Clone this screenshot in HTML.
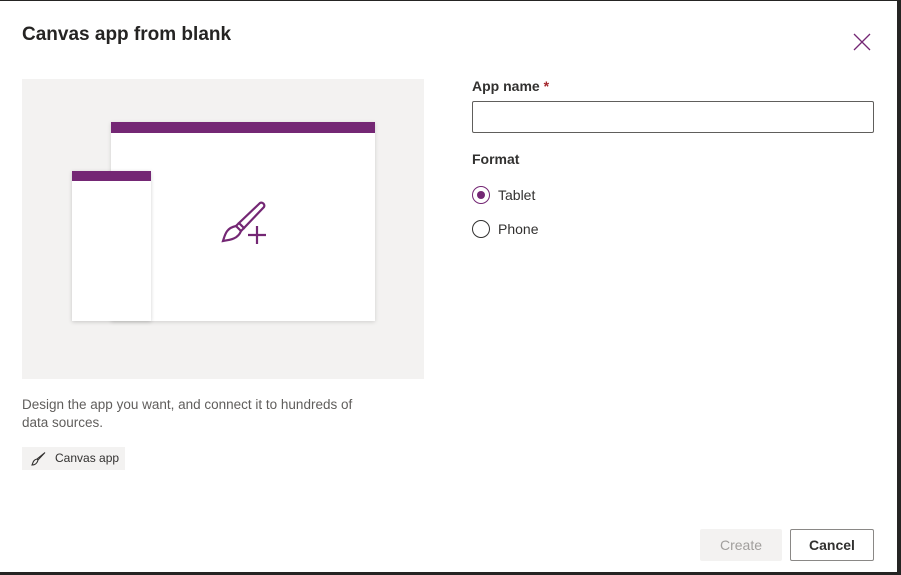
<!DOCTYPE html>
<html><head><style>
body{margin:0;width:901px;height:575px;background:#252423;position:relative;overflow:hidden;font-family:"Segoe UI","Liberation Sans",sans-serif;color:#323130}
.dlg{position:absolute;left:0;top:1px;width:897px;height:571px;background:#fff}
.a{position:absolute}
</style></head><body>
<div class="dlg">
<div class="a" style="left:22px;top:23px;font-size:19px;font-weight:bold;color:#252423">Canvas app from blank</div>
<svg class="a" style="left:853px;top:32px" width="18" height="18"><path d="M1 1L17 17M17 1L1 17" stroke="#742774" stroke-width="1.3"/></svg>
<div class="a" style="left:22px;top:78px;width:402px;height:300px;background:#f3f2f1"></div>
<div class="a" style="left:111px;top:121px;width:264px;height:199px;background:#fff;box-shadow:0 1px 4px rgba(0,0,0,.15)"><div style="height:11px;background:#742774"></div></div>
<div class="a" style="left:72px;top:170px;width:79px;height:150px;background:#fff;box-shadow:0 1px 4px rgba(0,0,0,.18)"><div style="height:10px;background:#742774"></div></div>
<svg class="a" style="left:218px;top:198px" width="50" height="48" fill="none" stroke="#742774" stroke-width="2.2">
<path d="M42 4 a3 3 0 0 1 4 4 L26 29 L21 24 Z"/><path d="M21 24 L18 27 M26 29 L23 32"/><path d="M18 27 L23 32 C20 40 12 41 5 42 C7 36 8 29 18 27 Z"/><path d="M39 27V45M30 36H48"/></svg>
<div class="a" style="left:22px;top:395px;font-size:13.5px;line-height:18px;color:#605e5c;width:355px">Design the app you want, and connect it to hundreds of data sources.</div>
<div class="a" style="left:22px;top:446px;width:103px;height:23px;background:#f3f2f1;font-size:12px;line-height:23px"><svg style="position:absolute;left:9px;top:4px" width="16" height="16" fill="none" stroke="#323130" stroke-width="1.1"><path d="M14 1.5 L7 9 L6 8 Z M6 8 L7 9 C6 13 3 14 1 14 C2 12 2 9 6 8Z"/></svg><span style="position:absolute;left:33px">Canvas app</span></div>
<div class="a" style="left:472px;top:77px;font-size:14px;font-weight:bold">App name <span style="color:#a4262c">*</span></div>
<div class="a" style="left:472px;top:100px;width:400px;height:30px;border:1px solid #605e5c;border-radius:2px"></div>
<div class="a" style="left:472px;top:150px;font-size:14px;font-weight:bold">Format</div>
<div class="a" style="left:472px;top:185px;width:18px;height:18px;border:1px solid #742774;border-radius:50%;box-sizing:border-box"><div style="position:absolute;left:4px;top:4px;width:8px;height:8px;border-radius:50%;background:#742774"></div></div>
<div class="a" style="left:498px;top:186px;font-size:14px">Tablet</div>
<div class="a" style="left:472px;top:219px;width:18px;height:18px;border:1px solid #323130;border-radius:50%;box-sizing:border-box"></div>
<div class="a" style="left:498px;top:220px;font-size:14px">Phone</div>
<div class="a" style="left:700px;top:528px;width:82px;height:32px;background:#f3f2f1;border-radius:2px;color:#a19f9d;font-size:14px;text-align:center;line-height:32px">Create</div>
<div class="a" style="left:790px;top:528px;width:82px;height:30px;border:1px solid #8a8886;border-radius:2px;font-size:14px;text-align:center;line-height:30px;font-weight:bold">Cancel</div>
</div>
</body></html>
